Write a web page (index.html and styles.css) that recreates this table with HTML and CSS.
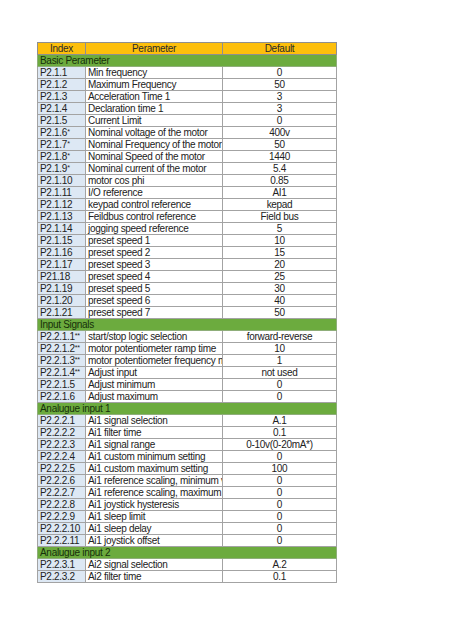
FILE: index.html
```html
<!DOCTYPE html>
<html>
<head>
<meta charset="utf-8">
<link rel="stylesheet" href="styles.css">
</head>
<body>
<div class="page">
<table class="sheet">
<colgroup><col class="c-idx"><col class="c-par"><col class="c-def"></colgroup>
<thead>
<tr class="head"><th>Index</th><th>Perameter</th><th>Default</th></tr>
</thead>
<tbody>
<tr class="sect"><td colspan="3">Basic Perameter</td></tr>
<tr><td class="idx">P2.1.1</td><td class="par">Min frequency</td><td class="def">0</td></tr>
<tr><td class="idx">P2.1.2</td><td class="par">Maximum Frequency</td><td class="def">50</td></tr>
<tr><td class="idx">P2.1.3</td><td class="par">Acceleration Time 1</td><td class="def">3</td></tr>
<tr><td class="idx">P2.1.4</td><td class="par">Declaration time 1</td><td class="def">3</td></tr>
<tr><td class="idx">P2.1.5</td><td class="par">Current Limit</td><td class="def">0</td></tr>
<tr><td class="idx">P2.1.6<span class="st">*</span></td><td class="par">Nominal voltage of the motor</td><td class="def">400v</td></tr>
<tr><td class="idx">P2.1.7<span class="st">*</span></td><td class="par">Nominal Frequency of the motor</td><td class="def">50</td></tr>
<tr><td class="idx">P2.1.8<span class="st">*</span></td><td class="par">Nominal Speed of the motor</td><td class="def">1440</td></tr>
<tr><td class="idx">P2.1.9<span class="st">*</span></td><td class="par">Nominal current of the motor</td><td class="def">5.4</td></tr>
<tr><td class="idx">P2.1.10</td><td class="par">motor cos phi</td><td class="def">0.85</td></tr>
<tr><td class="idx">P2.1.11</td><td class="par">I/O reference</td><td class="def">AI1</td></tr>
<tr><td class="idx">P2.1.12</td><td class="par">keypad control reference</td><td class="def">kepad</td></tr>
<tr><td class="idx">P2.1.13</td><td class="par">Feildbus control reference</td><td class="def">Field bus</td></tr>
<tr><td class="idx">P2.1.14</td><td class="par">jogging speed reference</td><td class="def">5</td></tr>
<tr><td class="idx">P2.1.15</td><td class="par">preset speed 1</td><td class="def">10</td></tr>
<tr><td class="idx">P2.1.16</td><td class="par">preset speed 2</td><td class="def">15</td></tr>
<tr><td class="idx">P2.1.17</td><td class="par">preset speed 3</td><td class="def">20</td></tr>
<tr><td class="idx">P21.18</td><td class="par">preset speed 4</td><td class="def">25</td></tr>
<tr><td class="idx">P2.1.19</td><td class="par">preset speed 5</td><td class="def">30</td></tr>
<tr><td class="idx">P2.1.20</td><td class="par">preset speed 6</td><td class="def">40</td></tr>
<tr><td class="idx">P2.1.21</td><td class="par">preset speed 7</td><td class="def">50</td></tr>
<tr class="sect"><td colspan="3">Input Signals</td></tr>
<tr><td class="idx">P2.2.1.1<span class="st">**</span></td><td class="par">start/stop logic selection</td><td class="def">forward-reverse</td></tr>
<tr><td class="idx">P2.2.1.2<span class="st">**</span></td><td class="par">motor potentiometer ramp time</td><td class="def">10</td></tr>
<tr><td class="idx">P2.2.1.3<span class="st">**</span></td><td class="par">motor potentiometer frequency memory</td><td class="def">1</td></tr>
<tr><td class="idx">P2.2.1.4<span class="st">**</span></td><td class="par">Adjust input</td><td class="def">not used</td></tr>
<tr><td class="idx">P2.2.1.5</td><td class="par">Adjust minimum</td><td class="def">0</td></tr>
<tr><td class="idx">P2.2.1.6</td><td class="par">Adjust maximum</td><td class="def">0</td></tr>
<tr class="sect"><td colspan="3">Analugue input 1</td></tr>
<tr><td class="idx">P2.2.2.1</td><td class="par">Ai1 signal selection</td><td class="def">A.1</td></tr>
<tr><td class="idx">P2.2.2.2</td><td class="par">Ai1 filter time</td><td class="def">0.1</td></tr>
<tr><td class="idx">P2.2.2.3</td><td class="par">Ai1 signal range</td><td class="def">0-10v(0-20mA*)</td></tr>
<tr><td class="idx">P2.2.2.4</td><td class="par">Ai1 custom minimum setting</td><td class="def">0</td></tr>
<tr><td class="idx">P2.2.2.5</td><td class="par">Ai1 custom maximum setting</td><td class="def">100</td></tr>
<tr><td class="idx">P2.2.2.6</td><td class="par">Ai1 reference scaling, minimum value</td><td class="def">0</td></tr>
<tr><td class="idx">P2.2.2.7</td><td class="par">Ai1 reference scaling, maximum value</td><td class="def">0</td></tr>
<tr><td class="idx">P2.2.2.8</td><td class="par">Ai1 joystick hysteresis</td><td class="def">0</td></tr>
<tr><td class="idx">P2.2.2.9</td><td class="par">Ai1 sleep limit</td><td class="def">0</td></tr>
<tr><td class="idx">P2.2.2.10</td><td class="par">Ai1 sleep delay</td><td class="def">0</td></tr>
<tr><td class="idx">P2.2.2.11</td><td class="par">Ai1 joystick offset</td><td class="def">0</td></tr>
<tr class="sect"><td colspan="3">Analugue input 2</td></tr>
<tr><td class="idx">P2.2.3.1</td><td class="par">Ai2 signal selection</td><td class="def">A.2</td></tr>
<tr><td class="idx">P2.2.3.2</td><td class="par">Ai2 filter time</td><td class="def">0.1</td></tr>
</tbody>
</table>
</div>
</body>
</html>
```
FILE: styles.css
```css
html, body {
  margin: 0;
  padding: 0;
  background: #ffffff;
}
.page {
  padding: 42px 0 0 37px;
}
.sheet {
  border-collapse: collapse;
  table-layout: fixed;
  width: 299px;
  font-family: "Liberation Sans", Arial, sans-serif;
  font-size: 10px;
  letter-spacing: -0.3px;
  color: #222222;
}
.c-idx { width: 48px; }
.c-par { width: 137px; }
.c-def { width: 114px; }
.sheet th, .sheet td {
  height: 11px;
  padding: 0 2px;
  line-height: 11px;
  border: 1px solid #a3a3a3;
  white-space: nowrap;
  overflow: hidden;
  text-overflow: clip;
  vertical-align: middle;
}
.head th {
  background: #fdbf0c;
  font-weight: normal;
  text-align: center;
  color: #2a2a2a;
  border-color: #8f8f8f;
}
.sect td {
  background: #6cab3e;
  color: #16300a;
  border-color: #8fae7a;
}
.idx {
  background: #dde8f4;
  text-align: left;
}
.par {
  text-align: left;
  padding-left: 1px;
}
.def {
  text-align: center;
}
.st {
  font-size: 7px;
  vertical-align: top;
  line-height: 9px;
}
```
